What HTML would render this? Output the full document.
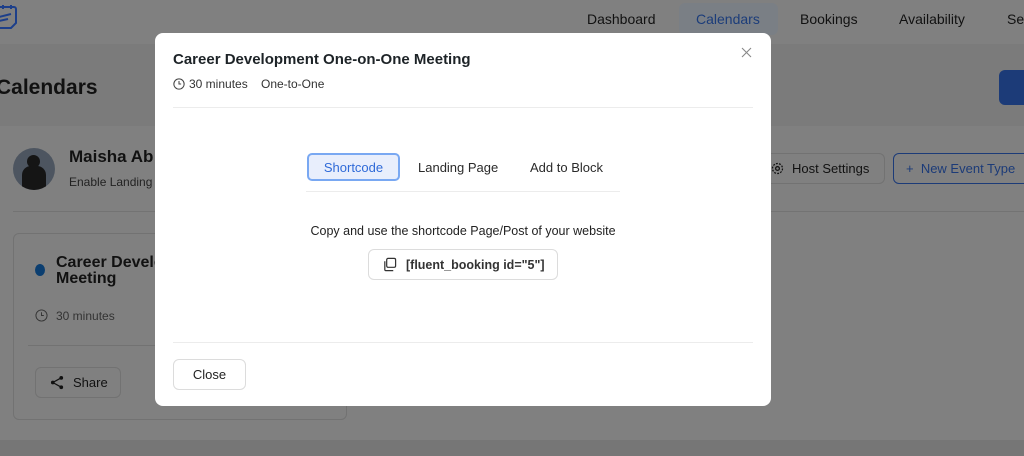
<!DOCTYPE html>
<html><head><style>
*{box-sizing:border-box;margin:0;padding:0}
body{width:1024px;height:456px;overflow:hidden;position:relative;font-family:"Liberation Sans",sans-serif;background:#7b7b7b;color:#1d2327}
.a{position:absolute}
.bg{color:#111}
</style></head><body>
<div class="a" style="left:0;top:0;width:1024px;height:44px;background:#808080"></div>
<svg class="a" style="left:-4px;top:3px" width="24" height="30" viewBox="0 0 24 30"><path d="M4 4h14a2 2 0 0 1 2 2v14l-5 5H4a2 2 0 0 1-2-2V6a2 2 0 0 1 2-2z M3 14l12-3 M3 18l9-2 M7 2v4 M15 2v4" fill="none" stroke="#1d3f8a" stroke-width="2"/></svg>
<div class="a bg" style="left:587px;top:11px;font-size:14px;color:#111">Dashboard</div>
<div class="a" style="left:679px;top:3px;width:99px;height:32px;background:#7a7f85;border-radius:6px"></div>
<div class="a" style="left:696px;top:11px;font-size:14px;color:#1c3d7a">Calendars</div>
<div class="a" style="left:800px;top:11px;font-size:14px;color:#111">Bookings</div>
<div class="a" style="left:899px;top:11px;font-size:14px;color:#111">Availability</div>
<div class="a" style="left:1007px;top:11px;font-size:14px;color:#111">Se</div>
<div class="a" style="left:-4px;top:76px;font-size:21px;font-weight:bold;color:#111">Calendars</div>
<div class="a" style="left:999px;top:70px;width:40px;height:35px;background:#1c3b78;border-radius:6px"></div>
<div class="a" style="left:0;top:126px;width:1024px;height:314px;background:#808080"></div>
<div class="a" style="left:0;top:440px;width:1024px;height:16px;background:#767676"></div>
<div class="a" style="left:13px;top:148px;width:42px;height:42px;border-radius:50%;background:#4d5560;overflow:hidden"><div style="position:absolute;left:14px;top:7px;width:13px;height:13px;border-radius:50%;background:#151515"></div><div style="position:absolute;left:9px;top:18px;width:24px;height:26px;border-radius:9px 9px 0 0;background:#151515"></div></div>
<div class="a" style="left:69px;top:147px;font-size:17px;font-weight:bold;color:#111">Maisha Ab</div>
<div class="a" style="left:69px;top:175px;font-size:12px;color:#222">Enable Landing</div>
<div class="a" style="left:760px;top:153px;width:125px;height:31px;border:1px solid #727272;border-radius:6px"></div>
<div class="a" style="left:792px;top:161px;font-size:13px;color:#111">Host Settings</div>
<svg class="a" style="left:770px;top:161px" width="15" height="15" viewBox="0 0 24 24"><circle cx="12" cy="12" r="3" fill="none" stroke="#111" stroke-width="2"/><circle cx="12" cy="12" r="8" fill="none" stroke="#111" stroke-width="2" stroke-dasharray="3 2"/></svg>
<div class="a" style="left:893px;top:153px;width:140px;height:31px;border:1px solid #1c3b78;border-radius:6px"></div>
<div class="a" style="left:906px;top:161px;font-size:13px;color:#1c3b78">+&nbsp; New Event Type</div>
<div class="a" style="left:13px;top:211px;width:1011px;height:1px;background:#737373"></div>
<div class="a" style="left:13px;top:233px;width:334px;height:187px;border:1px solid #727272;border-radius:6px"></div>
<div class="a" style="left:35px;top:264px;width:10px;height:12px;border-radius:50%;background:#0b3e70"></div>
<div class="a" style="left:56px;top:255px;font-size:16px;font-weight:bold;color:#111;line-height:16px">Career Develo<br>Meeting</div>
<div class="a" style="left:56px;top:309px;font-size:12px;color:#333">30 minutes</div>
<svg class="a" style="left:35px;top:309px" width="13" height="13" viewBox="0 0 14 14"><circle cx="7" cy="7" r="6" fill="none" stroke="#333"/><path d="M7 3.5V7h2.5" fill="none" stroke="#333"/></svg>
<div class="a" style="left:28px;top:345px;width:319px;height:1px;background:#727272"></div>
<div class="a" style="left:35px;top:367px;width:86px;height:31px;border:1px solid #727272;border-radius:6px"></div>
<div class="a" style="left:73px;top:375px;font-size:13px;color:#111">Share</div>
<svg class="a" style="left:50px;top:375px" width="15" height="15" viewBox="0 0 16 16"><circle cx="12" cy="3" r="2" fill="#111"/><circle cx="3" cy="8" r="2" fill="#111"/><circle cx="12" cy="13" r="2" fill="#111"/><path d="M12 3L3 8l9 5" fill="none" stroke="#111" stroke-width="1.3"/></svg>

<div class="a" style="left:155px;top:33px;width:616px;height:373px;background:#fff;border-radius:8px"></div>
<div class="a" style="left:173px;top:51px;font-size:15px;font-weight:bold;color:#1d2327">Career Development One-on-One Meeting</div>
<svg class="a" style="left:173px;top:78px" width="12" height="12" viewBox="0 0 14 14"><circle cx="7" cy="7" r="6" fill="none" stroke="#444" stroke-width="1.2"/><path d="M7 3.5V7h2.5" fill="none" stroke="#444" stroke-width="1.2"/></svg>
<div class="a" style="left:189px;top:77px;font-size:12px;color:#333">30 minutes</div>
<div class="a" style="left:261px;top:77px;font-size:12px;color:#333">One-to-One</div>
<svg class="a" style="left:741px;top:47px" width="11" height="11" viewBox="0 0 11 11"><path d="M1 1l9 9M10 1l-9 9" stroke="#888" stroke-width="1.1"/></svg>
<div class="a" style="left:173px;top:107px;width:580px;height:1px;background:#ececec"></div>
<div class="a" style="left:307px;top:153px;width:93px;height:28px;background:#e8eefc;border:2px solid #79a8f2;border-radius:5px"></div>
<div class="a" style="left:307px;top:160px;width:93px;text-align:center;font-size:13px;color:#2f6ad8">Shortcode</div>
<div class="a" style="left:418px;top:160px;font-size:13px;color:#2a2a2a">Landing Page</div>
<div class="a" style="left:530px;top:160px;font-size:13px;color:#2a2a2a">Add to Block</div>
<div class="a" style="left:306px;top:191px;width:314px;height:1px;background:#ececec"></div>
<div class="a" style="left:263px;top:224px;width:400px;text-align:center;font-size:12.5px;color:#222">Copy and use the shortcode Page/Post of your website</div>
<div class="a" style="left:368px;top:249px;width:190px;height:31px;border:1px solid #dcdcdc;border-radius:6px"></div>
<svg class="a" style="left:382px;top:257px" width="15" height="15" viewBox="0 0 16 16"><rect x="5" y="1.5" width="9.5" height="9.5" rx="1.5" fill="none" stroke="#333" stroke-width="1.3"/><path d="M3 4.5v9a1 1 0 0 0 1 1h8" fill="none" stroke="#333" stroke-width="1.3"/></svg>
<div class="a" style="left:406px;top:258px;font-size:12.5px;font-weight:bold;color:#333">[fluent_booking id="5"]</div>
<div class="a" style="left:173px;top:342px;width:580px;height:1px;background:#ececec"></div>
<div class="a" style="left:173px;top:359px;width:73px;height:31px;border:1px solid #dcdcdc;border-radius:6px"></div>
<div class="a" style="left:173px;top:367px;width:73px;text-align:center;font-size:13px;color:#222">Close</div>
</body></html>
